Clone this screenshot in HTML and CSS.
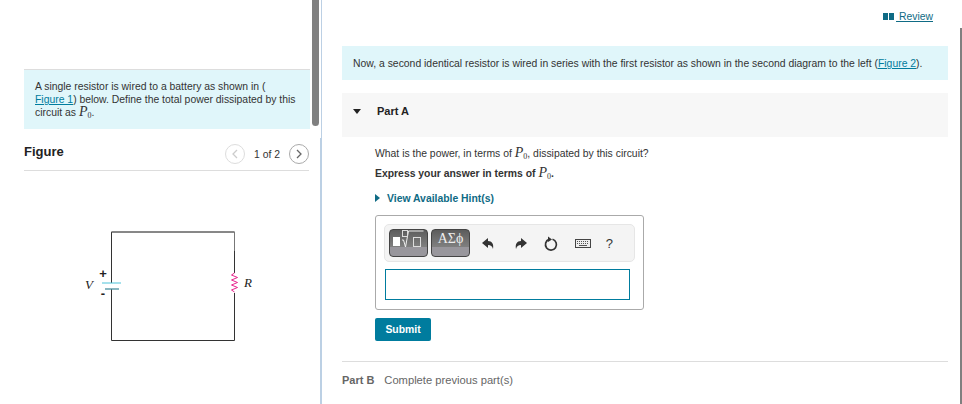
FILE: index.html
```html
<!DOCTYPE html>
<html lang="en">
<head>
    <meta charset="UTF-8">
    <title>Part A</title>
    <link rel="stylesheet" href="styles.css">
</head>
<body>

<div class="page">
    <div class="left">
        <div class="intro">
            A single resistor is wired to a battery as shown in (<br>
            <a href="#">Figure 1</a>) below. Define the total power dissipated by this<br>
            circuit as <span class="math">P<sub>0</sub></span>.
        </div>
        <div class="figure-head">
            <h2>Figure</h2>
            <div class="pager">
                <span class="round off">
                    <svg width="8" height="10" viewBox="0 0 8 10"><path d="M6 1 2 5l4 4" fill="none" stroke="#ccc" stroke-width="1.3"/></svg>
                </span>
                <span class="count">1 of 2</span>
                <span class="round">
                    <svg width="8" height="10" viewBox="0 0 8 10"><path d="M2 1l4 4-4 4" fill="none" stroke="#666" stroke-width="1.3"/></svg>
                </span>
            </div>
        </div>
        <div class="diagram">
            <svg width="190" height="130" viewBox="0 0 190 130">
                <path d="M41.500 62V11H164.500V52M164.500 72V119.500H41.500V68" fill="none" stroke="#333" stroke-width="1"/>
                <path d="M41.500 11H164.500V30" fill="none" stroke="#777" stroke-width="1"/>
                <path d="M32 62H51" stroke="#4cc3d9" stroke-width="1"/>
                <path d="M35 68H49" stroke="#4a8f9e" stroke-width="1.300"/>
                <path d="M164.500 52l-3 2 6 2.500-6 2.500 6 2.500-6 2.500 6 2.500-6 2.500 3 2" fill="none" stroke="#e8228c" stroke-width="1"/>
                <text x="33" y="57" class="sign">+</text>
                <text x="33" y="77" class="sign">-</text>
                <text x="15" y="68" class="label">V</text>
                <text x="174" y="66" class="label">R</text>
            </svg>
        </div>
    </div>

    <div class="right">
        <div class="review-row">
            <svg width="11" height="7" viewBox="0 0 11 7"><path d="M0 0h5v7H0zM6 0h5v7H6z" fill="#0f6b85"/></svg>
            <a href="#" class="review">&nbsp;Review</a>
        </div>
        <div class="note">
            Now, a second identical resistor is wired in series with the first resistor as shown in the second diagram to the left (<a href="#">Figure 2</a>).
        </div>
        <div class="part-bar">
            <span class="caret"></span>
            <strong>Part A</strong>
        </div>
        <div class="part-body">
            <p class="question">What is the power, in terms of <span class="math">P<sub>0</sub></span>, dissipated by this circuit?</p>
            <p class="express">Express your answer in terms of <span class="math">P<sub>0</sub></span>.</p>
            <a href="#" class="hints"><span class="hint-arrow"></span>View Available Hint(s)</a>
            <div class="answer">
                <div class="toolbar">
                    <button class="tool-btn tmpl">
                        <span class="white-box"></span>
                        <svg width="26" height="20" viewBox="0 0 26 20">
                            <path d="M2 10h1.500l2 7 3-16h15" fill="none" stroke="#eee" stroke-width="1"/>
                            <rect x="2.500" y="0.500" width="5" height="6" fill="none" stroke="#ddd"/>
                            <rect x="13.500" y="7.500" width="7" height="9" fill="none" stroke="#ddd"/>
                        </svg>
                    </button>
                    <button class="tool-btn greek">ΑΣϕ</button>
                    <div class="tools">
                        <svg width="16" height="16" viewBox="0 0 16 16"><path d="M7 2 1 7l6 5V9c3 0 4 1 5 4 1-5-1-8-5-8z" fill="#333"/></svg>
                        <svg width="16" height="16" viewBox="0 0 16 16"><path d="m9 2 6 5-6 5V9c-3 0-4 1-5 4-1-5 1-8 5-8z" fill="#333"/></svg>
                        <svg width="16" height="16" viewBox="0 0 16 16"><path d="M9.500 3.300a5.500 5.500 0 1 1-3.400.1" fill="none" stroke="#333" stroke-width="1.700"/><path d="M5 0.500 9 3.500 5 6z" fill="#333"/></svg>
                        <svg width="16" height="9" viewBox="0 0 16 9"><rect x=".5" y=".5" width="15" height="8" fill="#eee" stroke="#444"/><path d="M2 2.500h12M2 4.500h12" stroke="#555" stroke-dasharray="1 1"/><path d="M4 6.500h8" stroke="#555"/></svg>
                        <span class="help">?</span>
                    </div>
                </div>
                <div class="input-box"></div>
            </div>
            <button class="submit">Submit</button>
        </div>
        <div class="part-b">
            <strong>Part B</strong>
            <span>Complete previous part(s)</span>
        </div>
    </div>
</div>

<div class="scroll-left"></div>
<div class="scroll-right"></div>

</body>
</html>
```

FILE: styles.css
```css
:root {
    --text-color: #333;
    --link-color: #007c9e;
    --note-bg: #e0f6fa;
    --rule-color: #ddd;
    --divider: #bcd0e4;
}

html, body {
    margin: 0;
    height: 100%;
    overflow: hidden;
}

body {
    font-family: "Liberation Sans", Arial, sans-serif;
    font-size: 10.4px;
    color: var(--text-color);
    background-color: #fff;
}

a {
    color: var(--link-color);
}

.page {
    display: flex;
    height: 404px;
}

.math {
    font-family: "Liberation Serif", serif;
    font-style: italic;
    font-weight: normal;
    font-size: 14px;
    line-height: 0;
}

.math sub {
    font-size: 8px;
    font-style: normal;
    line-height: 0;
    vertical-align: -2px;
}

/* left column */
.left {
    width: 321px;
    flex-shrink: 0;
    padding: 69px 0 0 24px;
    box-sizing: border-box;
    background: linear-gradient(#fff 138px, var(--divider) 138px) right top / 1px 100% no-repeat;
}

.intro {
    width: 286px;
    height: 60px;
    box-sizing: border-box;
    padding: 10px 11px;
    background-color: var(--note-bg);
    border-top: 1px solid var(--rule-color);
    line-height: 13px;
}

.figure-head {
    width: 285px;
    height: 42px;
    box-sizing: border-box;
    display: flex;
    justify-content: space-between;
    align-items: flex-start;
    padding-top: 15px;
    border-bottom: 1px solid var(--rule-color);
}

.figure-head h2 {
    margin: 0;
    font-size: 13px;
    line-height: 16px;
    color: #222;
}

.pager {
    display: flex;
    align-items: center;
    gap: 9px;
}

.round {
    width: 20px;
    height: 20px;
    border: 1px solid #aaa;
    border-radius: 50%;
    display: flex;
    align-items: center;
    justify-content: center;
    box-sizing: border-box;
}

.round.off {
    border-color: #ddd;
}

.diagram {
    margin: 50px 0 0 46px;
}

.sign {
    font: bold 13px "Liberation Sans", sans-serif;
    fill: #222;
    text-anchor: middle;
}

.label {
    font: italic 13px "Liberation Serif", serif;
    fill: #222;
}

/* right column */
.right {
    flex: 1;
    min-width: 0;
    padding: 0 14px 0 20px;
    border-left: 1px solid var(--divider);
}

.review-row {
    height: 46px;
    display: flex;
    justify-content: flex-end;
    align-items: flex-start;
    padding: 10px 15px 0 0;
    box-sizing: border-box;
}

.review-row svg {
    margin: 3px 2px 0 0;
}

.review {
    line-height: 13px;
    color: #0f6b85;
}

.note {
    height: 34px;
    box-sizing: border-box;
    padding: 11px 11px 0;
    background-color: var(--note-bg);
    line-height: 13px;
    white-space: nowrap;
}

.part-bar {
    margin-top: 13px;
    height: 44px;
    box-sizing: border-box;
    display: flex;
    align-items: flex-start;
    padding: 12px 0 0 11px;
    background-color: #f7f7f7;
    line-height: 13px;
}

.part-bar strong {
    font-size: 11px;
    color: #222;
}

.caret {
    width: 0;
    height: 0;
    margin: 4px 16px 0 0;
    border-left: 4px solid transparent;
    border-right: 4px solid transparent;
    border-top: 5px solid #222;
}

.part-body {
    padding-left: 33px;
}

.question {
    margin: 9px 0 0;
    line-height: 15px;
}

.express {
    margin: 5px 0 0;
    line-height: 15px;
    font-weight: bold;
}

.hints {
    display: flex;
    align-items: center;
    margin-top: 10px;
    height: 14px;
    font-weight: bold;
    text-decoration: none;
    color: #0f6b85;
}

.hint-arrow {
    width: 0;
    height: 0;
    margin-right: 7px;
    border-top: 4px solid transparent;
    border-bottom: 4px solid transparent;
    border-left: 5px solid #0f6b85;
}

.answer {
    margin-top: 10px;
    width: 269px;
    height: 95px;
    box-sizing: border-box;
    padding: 8px;
    border: 1px solid #aaa;
    border-radius: 3px;
}

.toolbar {
    display: flex;
    gap: 3px;
    height: 38px;
    box-sizing: border-box;
    padding: 4px;
    background-color: #f4f4f4;
    border: 1px solid #e6e6e6;
    border-radius: 5px;
}

.tool-btn {
    height: 28px;
    width: 39px;
    padding: 0;
    display: flex;
    justify-content: center;
    border: 1px solid #444;
    border-radius: 4px;
    background: linear-gradient(#5c5c5c, #7f7f7f 64%, #98969c 64%);
    color: #eee;
}

.greek {
    font: 14px "Liberation Serif", serif;
    line-height: 18px;
}

.white-box {
    width: 7px;
    height: 9px;
    margin: 7px 0 0 1px;
    background-color: #fff;
    flex-shrink: 0;
}

.tools {
    flex: 1;
    display: flex;
    justify-content: space-between;
    align-items: center;
    padding: 1px 17px 0 8px;
}

.help {
    font-size: 13px;
}

.input-box {
    margin: 7px 0 0 1px;
    width: 245px;
    height: 31px;
    box-sizing: border-box;
    border: 1px solid var(--link-color);
}

.submit {
    display: block;
    margin-top: 8px;
    width: 56px;
    height: 23px;
    padding: 0;
    border: none;
    border-radius: 2px;
    background-color: var(--link-color);
    color: #fff;
    font: bold 10.4px "Liberation Sans", sans-serif;
}

.part-b {
    margin-top: 20px;
    padding-top: 11px;
    border-top: 1px solid var(--rule-color);
    line-height: 14px;
    color: #666;
}

.part-b strong {
    font-size: 11px;
    margin-right: 7px;
}

.part-b span {
    font-size: 11.2px;
}

/* scrollbars lie over the page */
.scroll-left {
    position: absolute;
    left: 312px;
    top: 0;
    width: 7px;
    height: 126px;
    background-color: #808080;
    border-radius: 0 0 4px 4px;
}

.scroll-right {
    position: absolute;
    left: 960px;
    top: 28px;
    width: 2px;
    bottom: 0;
    background-color: #808080;
}
```
